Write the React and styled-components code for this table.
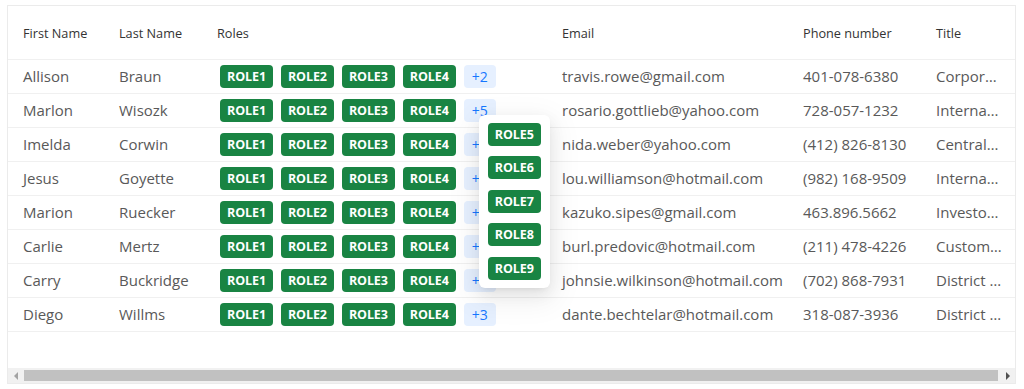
import React from "react";
import styled, { createGlobalStyle } from "styled-components";

const GlobalStyle = createGlobalStyle`
  html, body {
    margin: 0;
    background: #fff;
  }
  body {
    font-family: "Open Sans", "Noto Sans", Arial, sans-serif;
  }
`;

const Page = styled.div`
  padding: 5px 9px 5px 7px;
`;

const Frame = styled.div`
  width: 1009px;
  height: 379px;
  box-sizing: border-box;
  border: 1px solid #ebebeb;
  display: flex;
  flex-direction: column;
`;

const Viewport = styled.div`
  flex: 1;
  overflow: hidden;
`;

const Table = styled.table`
  width: 1007px;
  table-layout: fixed;
  border-collapse: collapse;
`;

const Th = styled.th`
  box-sizing: border-box;
  height: 53px;
  padding: 2px 16px 0 15px;
  text-align: left;
  font-weight: 400;
  font-size: 12.7px;
  color: #333;
  white-space: nowrap;
  border-bottom: 1px solid #f0f0f0;
`;

const Td = styled.td`
  height: 33px;
  padding: 0 ${(p) => (p.$clip ? 13 : 16)}px 0 15px;
  font-size: 15px;
  color: #595959;
  border-bottom: 1px solid #f0f0f0;
  white-space: nowrap;
  overflow: ${(p) => (p.$clip ? "hidden" : "visible")};
  text-overflow: ellipsis;
  position: relative;
`;

const TagRow = styled.div`
  display: flex;
  align-items: center;
  gap: 8px;
  padding-left: 3px;
`;

const Tag = styled.span`
  display: inline-flex;
  align-items: center;
  justify-content: center;
  height: 23px;
  padding: 0 7px;
  border-radius: 4px;
  background: #198443;
  color: #fff;
  font-size: 12.5px;
  font-weight: 700;
  letter-spacing: -0.1px;
  box-sizing: border-box;
`;

const MoreWrap = styled.span`
  position: relative;
  display: inline-flex;
`;

const More = styled.span`
  display: inline-flex;
  align-items: center;
  justify-content: center;
  min-width: 32px;
  height: 23px;
  padding: 0 6px;
  box-sizing: border-box;
  border-radius: 4px;
  background: #e6f0ff;
  color: #1677ff;
  font-size: 14px;
`;

const Popover = styled.div`
  position: absolute;
  top: 16px;
  left: 15px;
  z-index: 5;
  padding: 8px 9px;
  background: #fff;
  border-radius: 6px;
  display: flex;
  flex-direction: column;
  gap: 10.5px;
  box-shadow: 0 6px 16px 0 rgba(0, 0, 0, 0.08),
    0 3px 6px -4px rgba(0, 0, 0, 0.12), 0 9px 28px 8px rgba(0, 0, 0, 0.05);
`;

const ScrollBar = styled.div`
  height: 15px;
  background: #f1f1f1;
  display: flex;
  align-items: center;
`;

const ScrollBtn = styled.div`
  width: 15px;
  height: 15px;
  display: flex;
  align-items: center;
  justify-content: center;
`;

const Arrow = styled.span`
  width: 0;
  height: 0;
  border-top: 4px solid transparent;
  border-bottom: 4px solid transparent;
  ${(p) =>
    p.$dir === "left"
      ? `border-right: 4px solid ${p.$color};`
      : `border-left: 4px solid ${p.$color};`}
`;

const Thumb = styled.div`
  flex: 1;
  height: 11px;
  margin: 0 2px 0 1px;
  background: #c1c1c1;
`;

const columns = [
  { label: "First Name", width: 96 },
  { label: "Last Name", width: 98 },
  { label: "Roles", width: 345 },
  { label: "Email", width: 241 },
  { label: "Phone number", width: 133 },
  { label: "Title", width: 94 },
];

const people = [
  ["Allison", "Braun", 2, "travis.rowe@gmail.com", "401-078-6380", "Corporate Directives Officer"],
  ["Marlon", "Wisozk", 5, "rosario.gottlieb@yahoo.com", "728-057-1232", "International Markets Engineer"],
  ["Imelda", "Corwin", 4, "nida.weber@yahoo.com", "(412) 826-8130", "Central Data Manager"],
  ["Jesus", "Goyette", 1, "lou.williamson@hotmail.com", "(982) 168-9509", "Internal Branding Agent"],
  ["Marion", "Ruecker", 3, "kazuko.sipes@gmail.com", "463.896.5662", "Investor Metrics Liaison"],
  ["Carlie", "Mertz", 2, "burl.predovic@hotmail.com", "(211) 478-4226", "Customer Intranet Designer"],
  ["Carry", "Buckridge", 4, "johnsie.wilkinson@hotmail.com", "(702) 868-7931", "District Security Producer"],
  ["Diego", "Willms", 3, "dante.bechtelar@hotmail.com", "318-087-3936", "District Mobility Analyst"],
];

export default function App() {
  return (
    <Page>
      <GlobalStyle />
      <Frame>
        <Viewport>
          <Table>
            <colgroup>
              {columns.map((c) => (
                <col key={c.label} style={{ width: c.width }} />
              ))}
            </colgroup>
            <thead>
              <tr>
                {columns.map((c) => (
                  <Th key={c.label}>{c.label}</Th>
                ))}
              </tr>
            </thead>
            <tbody>
              {people.map(([first, last, extra, email, phone, title], i) => (
                <tr key={email}>
                  <Td>{first}</Td>
                  <Td>{last}</Td>
                  <Td>
                    <TagRow>
                      {[1, 2, 3, 4].map((n) => (
                        <Tag key={n}>ROLE{n}</Tag>
                      ))}
                      <MoreWrap>
                        <More>+{extra}</More>
                        {i === 1 && (
                          <Popover>
                            {[5, 6, 7, 8, 9].map((n) => (
                              <Tag key={n}>ROLE{n}</Tag>
                            ))}
                          </Popover>
                        )}
                      </MoreWrap>
                    </TagRow>
                  </Td>
                  <Td>{email}</Td>
                  <Td>{phone}</Td>
                  <Td $clip>{title}</Td>
                </tr>
              ))}
            </tbody>
          </Table>
        </Viewport>
        <ScrollBar>
          <ScrollBtn>
            <Arrow $dir="left" $color="#a3a3a3" />
          </ScrollBtn>
          <Thumb />
          <ScrollBtn>
            <Arrow $dir="right" $color="#505050" />
          </ScrollBtn>
        </ScrollBar>
      </Frame>
    </Page>
  );
}
